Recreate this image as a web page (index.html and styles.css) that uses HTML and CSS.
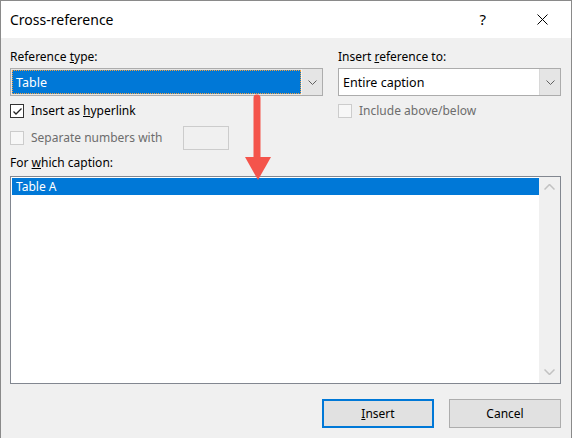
FILE: index.html
```html
<!DOCTYPE html>
<html>
<head>
<meta charset="utf-8">
<link rel="stylesheet" href="styles.css">
</head>
<body>
<div class="dialog">
  <div class="titlebar">
    <span class="title">Cross-reference</span>
    <span class="help">?</span>
    <svg class="close" width="11" height="11" viewBox="0 0 11 11"><path d="M0.5 0.5 L10.5 10.5 M10.5 0.5 L0.5 10.5" stroke="#000" stroke-width="1" fill="none"/></svg>
  </div>
  <div class="content">
    <div class="toprow">
      <div class="col left">
        <div class="label">Reference <u>t</u>ype:</div>
        <div class="combo list">
          <div class="field sel"><span>Table</span></div>
          <div class="dropbtn"><svg width="9" height="5" viewBox="0 0 9 5"><path d="M0.5 0.5 L4.5 4.5 L8.5 0.5" stroke="#606060" fill="none"/></svg></div>
        </div>
        <div class="check-row">
          <span class="cb checked"><svg width="11" height="11" viewBox="0 0 11 11"><path d="M1.5 5.5 L4 8 L9.5 2.5" stroke="#222" stroke-width="1.3" fill="none"/></svg></span>
          <span class="cb-label">Insert as <u>h</u>yperlink</span>
        </div>
        <div class="check-row sep">
          <span class="cb disabled"></span>
          <span class="cb-label dis">Separate numbers with</span>
          <span class="sepbox"></span>
        </div>
      </div>
      <div class="col right">
        <div class="label">Insert <u>r</u>eference to:</div>
        <div class="combo edit">
          <div class="field"><span>Entire caption</span></div>
          <div class="dropbtn"><svg width="9" height="5" viewBox="0 0 9 5"><path d="M0.5 0.5 L4.5 4.5 L8.5 0.5" stroke="#606060" fill="none"/></svg></div>
        </div>
        <div class="check-row">
          <span class="cb disabled"></span>
          <span class="cb-label dis">Include above/below</span>
        </div>
      </div>
    </div>
    <div class="label caption-label">For <u>w</u>hich caption:</div>
    <div class="listbox">
      <div class="items">
        <div class="item selected">Table A</div>
      </div>
      <div class="scrollbar">
        <svg width="11" height="6" viewBox="0 0 11 6"><path d="M0.5 5.5 L5.5 0.5 L10.5 5.5" stroke="#c2c2c2" stroke-width="1.5" fill="none"/></svg>
        <svg width="11" height="6" viewBox="0 0 11 6"><path d="M0.5 0.5 L5.5 5.5 L10.5 0.5" stroke="#c2c2c2" stroke-width="1.5" fill="none"/></svg>
      </div>
    </div>
    <div class="buttons">
      <button class="btn default"><u>I</u>nsert</button>
      <button class="btn">Cancel</button>
    </div>
  </div>
  <svg class="arrow" width="28" height="90" viewBox="0 0 28 90">
    <line x1="13" y1="4" x2="13" y2="66" stroke="#f4544b" stroke-width="7" stroke-linecap="round"/>
    <polygon points="1,63 27,63 14,86" fill="#f4544b"/>
  </svg>
</div>
</body>
</html>
```
FILE: styles.css
```css
* { box-sizing: border-box; }
html, body { margin: 0; padding: 0; }
body {
  width: 572px;
  height: 438px;
  overflow: hidden;
  font-family: "Noto Sans", "Open Sans", sans-serif;
  font-size: 12px;
  color: #000;
}
.dialog {
  position: relative;
  width: 572px;
  height: 438px;
  border: 1px solid #8a8a8a;
  border-bottom: none;
  background: #f0f0f0;
  display: flex;
  flex-direction: column;
}
.titlebar {
  height: 37px;
  background: #fff;
  display: flex;
  align-items: center;
  padding-left: 9px;
  flex-shrink: 0;
}
.title {
  font-size: 14px;
  flex: 1;
  margin-top: -1px;
}
.help {
  font-size: 15px;
  margin-right: 51px;
  margin-top: -2px;
}
.close {
  margin-right: 23px;
  margin-top: -1px;
}
.content {
  padding: 0 10px 0 9px;
  display: flex;
  flex-direction: column;
}
.toprow {
  display: flex;
  gap: 15px;
}
.col { display: flex; flex-direction: column; }
.col.left { width: 313px; }
.col.right { width: 223px; }
.label {
  line-height: 16px;
  height: 16px;
  margin-top: 11px;
}
.combo {
  margin-top: 3px;
  height: 28px;
  border: 1px solid #adadad;
  display: flex;
}
.combo.list { background: #e5e5e5; }
.combo.edit { background: #fff; border-color: #acacac; }
.field {
  flex: 1;
  display: flex;
  align-items: center;
  padding-left: 4px;
  font-size: 12.5px;
}
.field.sel {
  margin: 1px 0 1px 1px;
  background: #0078d7;
  color: #fff;
  border: 1px dotted #f0a040;
  padding-left: 3px;
}
.dropbtn {
  width: 21px;
  display: flex;
  align-items: center;
  justify-content: center;
  background: #e5e5e5;
  border-left: 1px solid #d8d8d8;
}
.combo.list .dropbtn { border-left: 1px solid #f3f3f3; }
.check-row {
  display: flex;
  align-items: center;
  height: 16px;
  margin-top: 7px;
}
.check-row.sep {
  height: 24px;
  margin-top: 7px;
}
.cb {
  width: 14px;
  height: 14px;
  border: 1px solid #333;
  background: #fff;
  display: flex;
  align-items: center;
  justify-content: center;
  margin-right: 7px;
}
.cb.disabled {
  border-color: #cccccc;
  background: #f7f7f7;
}
.cb-label { line-height: 16px; }
.cb-label.dis { color: #6d6d6d; }
.sepbox {
  width: 46px;
  height: 24px;
  margin-left: auto;
  margin-right: 94px;
  border: 1px solid #cccccc;
  background: #f0f0f0;
}
.caption-label { margin-top: 5px; }
.listbox {
  margin-top: 5px;
  height: 208px;
  border: 1px solid #828790;
  background: #fff;
  display: flex;
}
.items {
  flex: 1;
  padding: 1px 0 0 1px;
}
.item {
  height: 17px;
  line-height: 17px;
  padding-left: 4px;
}
.item.selected { background: #0078d7; color: #fff; }
.scrollbar {
  width: 21px;
  background: #f0f0f0;
  display: flex;
  flex-direction: column;
  justify-content: space-between;
  align-items: center;
  padding: 7px 0 8px;
}
.buttons {
  display: flex;
  justify-content: flex-end;
  gap: 15px;
  margin-top: 15px;
}
.btn {
  width: 112px;
  height: 29px;
  background: #e1e1e1;
  border: 1px solid #adadad;
  font-family: inherit;
  font-size: 12px;
  color: #000;
  padding: 0;
}
.btn.default { border: 2px solid #0078d7; }
.arrow {
  position: absolute;
  left: 243px;
  top: 93px;
}
```
